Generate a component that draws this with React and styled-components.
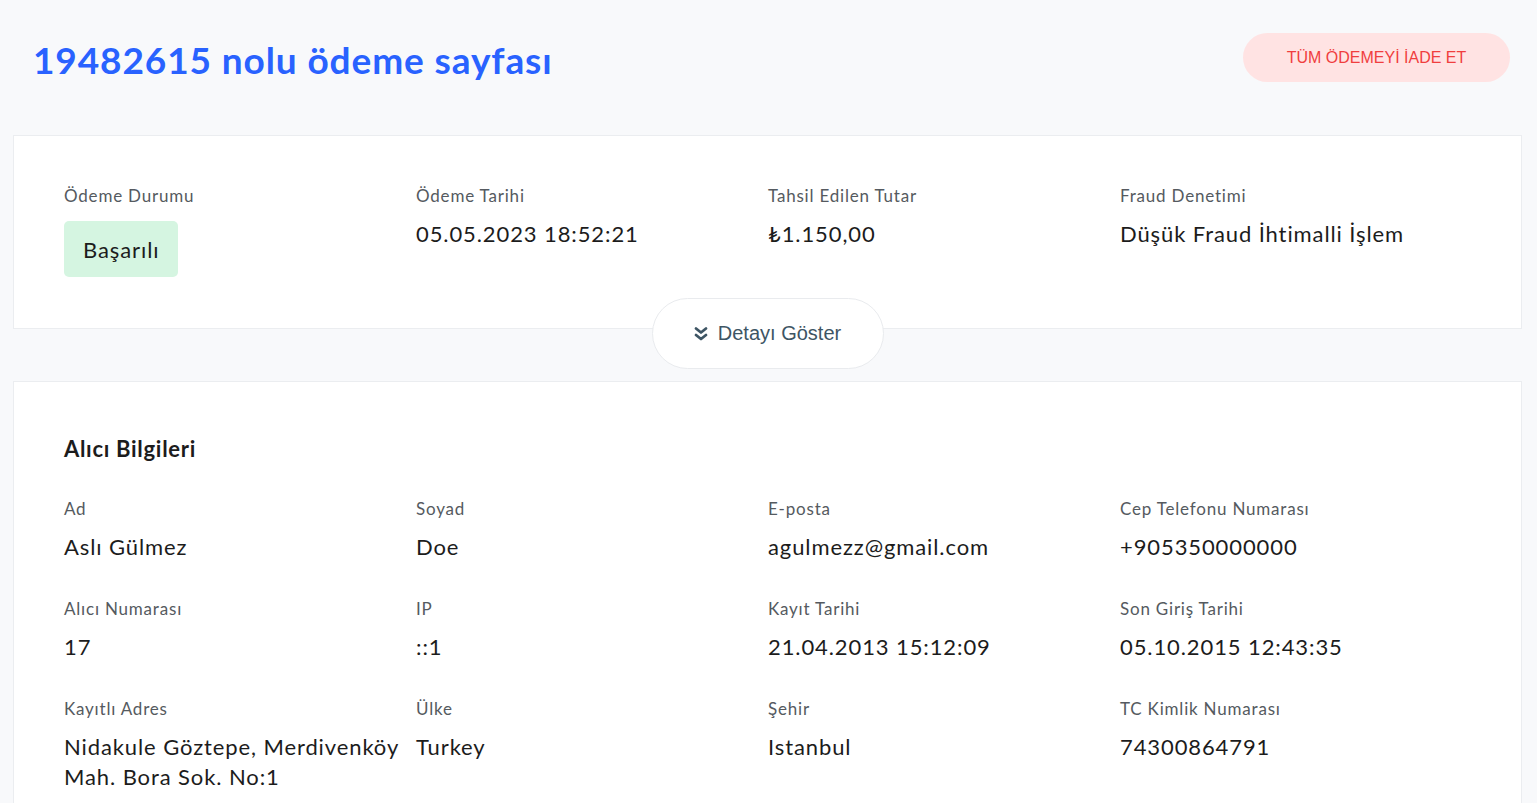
import React from "react";
import styled, { createGlobalStyle } from "styled-components";

const Global = createGlobalStyle`
  html, body { margin: 0; padding: 0; background: #f8f9fb; }
  body { font-family: Lato, "Noto Sans", sans-serif; color: #1c1c1c; }
  * { box-sizing: border-box; }
`;

const Page = styled.div`
  padding: 33px 15px 0 13px;
  min-height: 803px;
`;

const Header = styled.header`
  display: flex;
  align-items: center;
  justify-content: space-between;
  height: 49px;
  margin-bottom: 53px;
  padding: 0 12px 0 20px;
`;

const Title = styled.h1`
  margin: 4px 0 0;
  font-family: Lato, sans-serif;
  font-weight: 700;
  font-size: 37px;
  color: #2962ff;
  letter-spacing: 0.9px;
`;

const RefundButton = styled.button`
  height: 49px;
  width: 267px;
  border: none;
  border-radius: 25px;
  background: #ffe3e3;
  color: #f03e3e;
  font-family: "Liberation Sans", Arial, sans-serif;
  font-size: 16px;
  cursor: pointer;
`;

const Card = styled.section`
  background: #fff;
  border: 1px solid #ebedf0;
  padding: ${(p) => p.$pad};
`;

const Grid = styled.div`
  display: grid;
  grid-template-columns: repeat(4, 352px);
  row-gap: ${(p) => p.$rowGap || 0}px;
`;

const Field = styled.div`
  display: flex;
  flex-direction: column;
  align-items: flex-start;
`;

const Label = styled.div`
  font-size: 17px;
  line-height: 24px;
  letter-spacing: 0.8px;
  color: #555a60;
  margin-bottom: ${(p) => (p.$badge ? 13 : 11)}px;
`;

const Value = styled.div`
  font-size: 22px;
  line-height: 30px;
  letter-spacing: 0.9px;
  color: #1c1c1c;
`;

const Badge = styled.div`
  background: #d5f5e1;
  border-radius: 5px;
  padding: 0 19px;
  height: 56px;
  display: flex;
  align-items: center;
  font-size: 22px;
  letter-spacing: 0.9px;
  color: #1c1c1c;
`;

const ToggleRow = styled.div`
  display: flex;
  justify-content: center;
  margin: -31px 0 12px;
  position: relative;
  z-index: 1;
`;

const ToggleButton = styled.button`
  width: 232px;
  height: 71px;
  border-radius: 36px;
  background: #fff;
  border: 1px solid #e9ebee;
  display: flex;
  align-items: center;
  justify-content: center;
  gap: 10px;
  font-family: "Liberation Sans", Arial, sans-serif;
  font-size: 20px;
  color: #3e5564;
  cursor: pointer;
  svg { margin-top: 1px; }
`;

const SectionTitle = styled.h2`
  margin: 0 0 33px;
  font-size: 22px;
  line-height: 30px;
  font-weight: 700;
  letter-spacing: 0.7px;
  color: #1c1c1c;
`;

const summary = [
  { label: "Ödeme Tarihi", value: "05.05.2023 18:52:21" },
  { label: "Tahsil Edilen Tutar", value: "₺1.150,00" },
  { label: "Fraud Denetimi", value: "Düşük Fraud İhtimalli İşlem" },
];

const buyer = [
  ["Ad", "Aslı Gülmez"],
  ["Soyad", "Doe"],
  ["E-posta", "agulmezz@gmail.com"],
  ["Cep Telefonu Numarası", "+905350000000"],
  ["Alıcı Numarası", "17"],
  ["IP", "::1"],
  ["Kayıt Tarihi", "21.04.2013 15:12:09"],
  ["Son Giriş Tarihi", "05.10.2015 12:43:35"],
  ["Kayıtlı Adres", "Nidakule Göztepe, Merdivenköy Mah. Bora Sok. No:1"],
  ["Ülke", "Turkey"],
  ["Şehir", "Istanbul"],
  ["TC Kimlik Numarası", "74300864791"],
];

const Chevrons = () => (
  <svg width="14" height="16" viewBox="0 0 14 16" fill="none">
    <path d="M2 2.5l5 4 5-4" stroke="#3e5564" strokeWidth="2.8" strokeLinecap="round" strokeLinejoin="round" />
    <path d="M2 9l5 4 5-4" stroke="#3e5564" strokeWidth="2.8" strokeLinecap="round" strokeLinejoin="round" />
  </svg>
);

export default function App() {
  return (
    <>
      <Global />
      <Page>
        <Header>
          <Title>19482615 nolu ödeme sayfası</Title>
          <RefundButton>TÜM ÖDEMEYİ İADE ET</RefundButton>
        </Header>

        <Card $pad="48px 50px 51px 50px">
          <Grid>
            <Field>
              <Label $badge>Ödeme Durumu</Label>
              <Badge>Başarılı</Badge>
            </Field>
            {summary.map((f) => (
              <Field key={f.label}>
                <Label>{f.label}</Label>
                <Value>{f.value}</Value>
              </Field>
            ))}
          </Grid>
        </Card>

        <ToggleRow>
          <ToggleButton>
            <Chevrons />
            Detayı Göster
          </ToggleButton>
        </ToggleRow>

        <Card $pad="52px 50px 40px 50px">
          <SectionTitle>Alıcı Bilgileri</SectionTitle>
          <Grid $rowGap={35}>
            {buyer.map(([l, v]) => (
              <Field key={l}>
                <Label>{l}</Label>
                <Value>{v}</Value>
              </Field>
            ))}
          </Grid>
        </Card>
      </Page>
    </>
  );
}
